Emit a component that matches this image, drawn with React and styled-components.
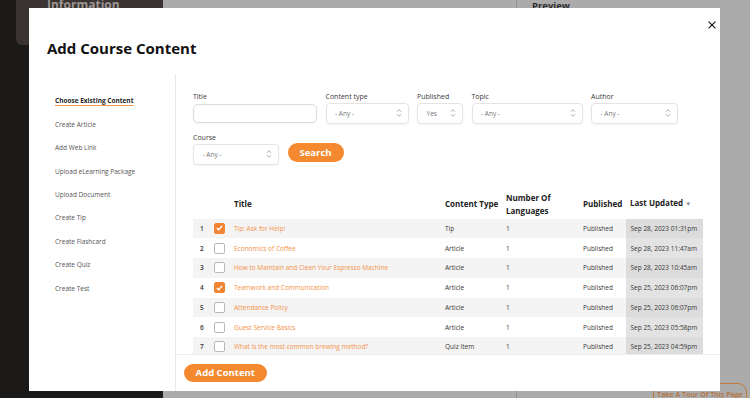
import React from "react";
import styled, { createGlobalStyle } from "styled-components";

const Global = createGlobalStyle`
  html, body { margin: 0; padding: 0; }
  body { font-family: "Open Sans", "Liberation Sans", sans-serif; }
  * { box-sizing: border-box; }
`;

const ORANGE = "#f5892f";

const Page = styled.div`
  position: relative;
  width: 750px;
  height: 398px;
  display: flex;
  overflow: hidden;
`;

const Sidebar = styled.div`
  width: 163px;
  flex: none;
  background: #1c1a19;
  padding-left: 16px;
`;

const SideCard = styled.div`
  height: 45px;
  background: #3a3331;
  border-bottom-left-radius: 6px;
  padding-left: 31px;
  overflow: hidden;
`;

const SideTitle = styled.div`
  margin-top: -1px;
  font-size: 12px;
  line-height: 12px;
  font-weight: 700;
  color: #9d9694;
`;

const Main = styled.div`
  flex: 1;
  display: flex;
  background: #ababab;
`;

const MainLeft = styled.div`
  width: 354px;
  flex: none;
  border-right: 1px solid #929292;
`;

const MainRight = styled.div`
  flex: 1;
  padding-left: 15px;
`;

const PreviewTitle = styled.div`
  margin-top: 0.5px;
  font-size: 9.5px;
  line-height: 9.5px;
  font-weight: 700;
  color: #2b2b2b;
`;

const TourButton = styled.div`
  position: absolute;
  left: 653px;
  top: 383px;
  width: 94px;
  height: 22px;
  border: 1px solid #c47632;
  border-radius: 9px;
  padding-top: 5.5px;
  text-align: center;
  font-size: 7.2px;
  line-height: 9px;
  font-weight: 600;
  color: #b8703a;
  white-space: nowrap;
`;

const Modal = styled.div`
  position: absolute;
  left: 29px;
  top: 8px;
  width: 691px;
  height: 383px;
  background: #fff;
  display: flex;
  flex-direction: column;
`;

const ModalHeader = styled.div`
  height: 66px;
  flex: none;
  padding: 29.5px 18px 0 18px;
`;

const ModalTitle = styled.h2`
  margin: 0;
  font-size: 15px;
  font-weight: 700;
  color: #111;
  line-height: normal;
`;

const CloseButton = styled.button`
  position: absolute;
  top: 5px;
  right: 4.5px;
  width: 8px;
  height: 8px;
  padding: 0;
  border: 0;
  background: none;
  display: flex;
  margin-top: 8px;
`;

const Body = styled.div`
  flex: 1;
  display: flex;
  min-height: 0;
`;

const Nav = styled.nav`
  width: 147px;
  flex: none;
  border-right: 1px solid #e9e9e9;
  padding: 15px 0 0 26px;
`;

const NavItem = styled.div`
  height: 23.45px;
  display: flex;
  align-items: center;
  font-size: 6.5px;
  font-weight: ${(p) => (p.$active ? 700 : 400)};
  color: ${(p) => (p.$active ? "#1e1e1e" : "#555")};
  text-decoration: ${(p) => (p.$active ? "underline" : "none")};
  text-decoration-color: #f29a55;
  text-decoration-thickness: 1px;
  text-underline-offset: 2px;
`;

const Panel = styled.div`
  flex: 1;
  min-width: 0;
  display: flex;
  flex-direction: column;
`;

const Scroll = styled.div`
  flex: 1;
  min-height: 0;
  overflow: hidden;
  padding: 17.5px 17px 0 17px;
`;

const Filters = styled.div`
  display: flex;
  flex-wrap: wrap;
  column-gap: 8.5px;
  row-gap: 9px;
`;

const Field = styled.div`
  display: flex;
  flex-direction: column;
  gap: 2px;
`;

const Label = styled.label`
  font-size: 7px;
  line-height: 9.5px;
  color: #3a3a3a;
`;

const TextInput = styled.div`
  width: ${(p) => p.$w}px;
  height: 19.5px;
  margin-top: 0.5px;
  border: 1px solid #dcdcdc;
  border-radius: 5px;
  box-shadow: 0 1px 2px rgba(0, 0, 0, 0.05);
`;

const SelectBox = styled.div`
  width: ${(p) => p.$w}px;
  height: 20.5px;
  border: 1px solid #e4e4e4;
  border-radius: 4px;
  box-shadow: 0 1px 2px rgba(0, 0, 0, 0.05);
  display: flex;
  align-items: center;
  justify-content: space-between;
  padding: 0 6px 0 8.5px;
  font-size: 6.5px;
  color: #777;
`;

const SearchButton = styled.button`
  align-self: flex-end;
  margin-bottom: 2.5px;
  width: 56px;
  height: 19.5px;
  border: 0;
  border-radius: 10px;
  background: ${ORANGE};
  color: #fff;
  font-family: inherit;
  font-size: 9.5px;
  font-weight: 700;
  padding: 0;
`;

const Table = styled.table`
  margin-top: 24px;
  width: 510px;
  table-layout: fixed;
  border-collapse: collapse;
`;

const Th = styled.th`
  height: 30px;
  padding: 0 4px;
  text-align: left;
  vertical-align: middle;
  font-size: 8px;
  line-height: 13px;
  font-weight: 700;
  color: #222;
  white-space: nowrap;
`;

const Row = styled.tr`
  background: ${(p) => (p.$odd ? "#f4f4f4" : "#fff")};
`;

const Td = styled.td`
  height: 19.75px;
  padding: 0 4px;
  font-size: 6.5px;
  color: #383838;
  white-space: nowrap;
  vertical-align: middle;
`;

const NumTd = styled(Td)`
  padding-left: 7px;
  font-weight: 600;
  color: #333;
`;

const SortedTd = styled(Td)`
  background: ${(p) => (p.$odd ? "#dcdcdc" : "#e3e3e3")};
  padding-left: 4.5px;
`;

const LinkText = styled.span`
  color: #f39147;
`;

const Box = styled.span`
  display: flex;
  align-items: center;
  justify-content: center;
  width: 11px;
  height: 11px;
  border-radius: 2px;
  border: 1px solid ${(p) => (p.$checked ? "#f08533" : "#b8b8b8")};
  background: ${(p) => (p.$checked ? "#f08533" : "#fff")};
`;

const SortArrow = styled.span`
  margin-left: 2px;
  font-size: 6px;
  color: #888;
`;

const Footer = styled.div`
  height: 37.5px;
  flex: none;
  border-top: 1px solid #ececec;
  padding-left: 8px;
  display: flex;
  align-items: center;
`;

const AddButton = styled.button`
  width: 82.5px;
  height: 18.5px;
  border: 0;
  border-radius: 10px;
  background: ${ORANGE};
  color: #fff;
  font-family: inherit;
  font-size: 9.5px;
  font-weight: 700;
  padding: 0;
`;

const Chevrons = () => (
  <svg width="6" height="10" viewBox="0 0 6 10" fill="none" stroke="#9a9a9a" strokeWidth="0.8">
    <path d="M1 3.8 L3 1.6 L5 3.8" />
    <path d="M1 6.2 L3 8.4 L5 6.2" />
  </svg>
);

const Check = () => (
  <svg width="7" height="6" viewBox="0 0 7 6" fill="none" stroke="#fff" strokeWidth="1.4">
    <path d="M0.8 3 L2.7 4.8 L6.2 0.9" />
  </svg>
);

const Select = ({ w, value = "- Any -" }) => (
  <SelectBox $w={w}>
    <span>{value}</span>
    <Chevrons />
  </SelectBox>
);

const navItems = [
  "Choose Existing Content",
  "Create Article",
  "Add Web Link",
  "Upload eLearning Package",
  "Upload Document",
  "Create Tip",
  "Create Flashcard",
  "Create Quiz",
  "Create Test",
];

const rows = [
  { t: "Tip: Ask for Help!", type: "Tip", d: "Sep 28, 2023 01:31pm", c: true },
  { t: "Economics of Coffee", type: "Article", d: "Sep 28, 2023 11:47am" },
  { t: "How to Maintain and Clean Your Espresso Machine", type: "Article", d: "Sep 28, 2023 10:45am" },
  { t: "Teamwork and Communication", type: "Article", d: "Sep 25, 2023 06:07pm", c: true },
  { t: "Attendance Policy", type: "Article", d: "Sep 25, 2023 06:07pm" },
  { t: "Guest Service Basics", type: "Article", d: "Sep 25, 2023 05:58pm" },
  { t: "What is the most common brewing method?", type: "Quiz Item", d: "Sep 25, 2023 04:59pm" },
];

export default function App() {
  return (
    <Page>
      <Global />
      <Sidebar>
        <SideCard>
          <SideTitle>Information</SideTitle>
        </SideCard>
      </Sidebar>
      <Main>
        <MainLeft />
        <MainRight>
          <PreviewTitle>Preview</PreviewTitle>
        </MainRight>
      </Main>
      <TourButton>Take A Tour Of This Page</TourButton>

      <Modal>
        <ModalHeader>
          <ModalTitle>Add Course Content</ModalTitle>
        </ModalHeader>
        <CloseButton aria-label="Close">
          <svg width="8" height="8" viewBox="0 0 8 8" stroke="#1a1a1a" strokeWidth="1.2">
            <path d="M0.6 0.6 L7.4 7.4 M7.4 0.6 L0.6 7.4" />
          </svg>
        </CloseButton>
        <Body>
          <Nav>
            {navItems.map((n, i) => (
              <NavItem key={n} $active={i === 0}>
                {n}
              </NavItem>
            ))}
          </Nav>
          <Panel>
            <Scroll>
              <Filters>
                <Field>
                  <Label>Title</Label>
                  <TextInput $w={124} />
                </Field>
                <Field>
                  <Label>Content type</Label>
                  <Select w={83} />
                </Field>
                <Field>
                  <Label>Published</Label>
                  <Select w={46} value="Yes" />
                </Field>
                <Field>
                  <Label>Topic</Label>
                  <Select w={111} />
                </Field>
                <Field>
                  <Label>Author</Label>
                  <Select w={87} />
                </Field>
                <Field>
                  <Label>Course</Label>
                  <Select w={86} />
                </Field>
                <SearchButton>Search</SearchButton>
              </Filters>

              <Table>
                <colgroup>
                  <col style={{ width: 17 }} />
                  <col style={{ width: 20 }} />
                  <col style={{ width: 211 }} />
                  <col style={{ width: 61 }} />
                  <col style={{ width: 77 }} />
                  <col style={{ width: 47 }} />
                  <col style={{ width: 77 }} />
                </colgroup>
                <thead>
                  <tr>
                    <Th />
                    <Th />
                    <Th>Title</Th>
                    <Th>Content Type</Th>
                    <Th>
                      Number Of
                      <br />
                      Languages
                    </Th>
                    <Th>Published</Th>
                    <Th>
                      Last Updated<SortArrow>▼</SortArrow>
                    </Th>
                  </tr>
                </thead>
                <tbody>
                  {rows.map((r, i) => (
                    <Row key={i} $odd={i % 2 === 0}>
                      <NumTd>{i + 1}</NumTd>
                      <Td>
                        <Box $checked={r.c}>{r.c && <Check />}</Box>
                      </Td>
                      <Td>
                        <LinkText>{r.t}</LinkText>
                      </Td>
                      <Td>{r.type}</Td>
                      <Td>1</Td>
                      <Td>Published</Td>
                      <SortedTd $odd={i % 2 === 0}>{r.d}</SortedTd>
                    </Row>
                  ))}
                </tbody>
              </Table>
            </Scroll>
            <Footer>
              <AddButton>Add Content</AddButton>
            </Footer>
          </Panel>
        </Body>
      </Modal>
    </Page>
  );
}
